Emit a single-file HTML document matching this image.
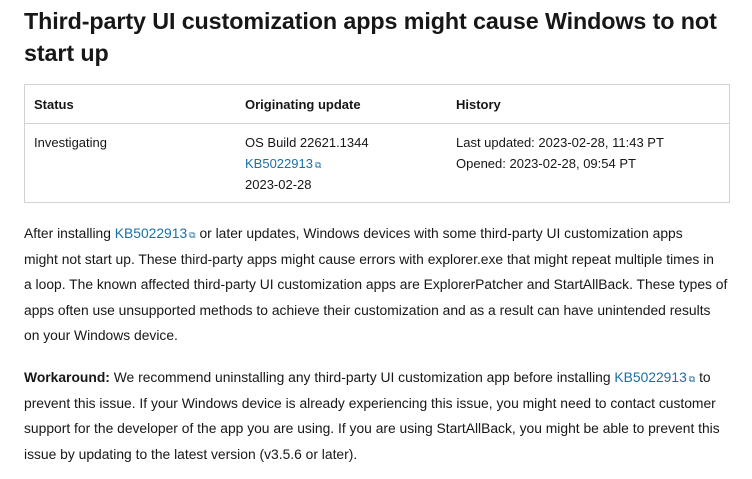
<!DOCTYPE html>
<html><head><meta charset="utf-8"><style>
body{margin:0;background:#fff;color:#171717;font-family:"Liberation Sans",sans-serif;width:752px;height:479px;overflow:hidden}
h1{position:absolute;left:24px;top:5px;margin:0;font-size:23.3px;font-weight:600;line-height:32px;letter-spacing:-0.1px;white-space:nowrap}
table{position:absolute;left:24px;top:84px;width:706px;border-collapse:collapse;font-size:13px;border:1px solid #d2d2d2}
th{text-align:left;font-weight:600;padding:0 9px;height:38px;border-bottom:1px solid #d2d2d2}
td{vertical-align:top;padding:8px 9px 0;height:79px;line-height:21px;box-sizing:border-box}
a{text-decoration:none;color:#1d6fa5}
.ext{font-size:9px;margin-left:2px;line-height:0}
.p{position:absolute;left:24px;font-size:13.85px;line-height:25.5px;white-space:nowrap;letter-spacing:0}
</style></head><body>
<h1>Third-party UI customization apps might cause Windows to not<br>start up</h1>
<table>
<tr><th style="width:193px">Status</th><th style="width:193px">Originating update</th><th>History</th></tr>
<tr><td>Investigating</td><td>OS Build 22621.1344<br><a>KB5022913<span class="ext">⧉</span></a><br>2023-02-28</td><td>Last updated: 2023-02-28, 11:43 PT<br>Opened: 2023-02-28, 09:54 PT</td></tr>
</table>
<div class="p" style="top:221px">After installing <a>KB5022913<span class="ext">⧉</span></a> or later updates, Windows devices with some third-party UI customization apps<br>might not start up. These third-party apps might cause errors with explorer.exe that might repeat multiple times in<br>a loop. The known affected third-party UI customization apps are ExplorerPatcher and StartAllBack. These types of<br>apps often use unsupported methods to achieve their customization and as a result can have unintended results<br>on your Windows device.</div>
<div class="p" style="top:365px"><b>Workaround:</b> We recommend uninstalling any third-party UI customization app before installing <a>KB5022913<span class="ext">⧉</span></a> to<br>prevent this issue. If your Windows device is already experiencing this issue, you might need to contact customer<br>support for the developer of the app you are using. If you are using StartAllBack, you might be able to prevent this<br>issue by updating to the latest version (v3.5.6 or later).</div>
</body></html>
